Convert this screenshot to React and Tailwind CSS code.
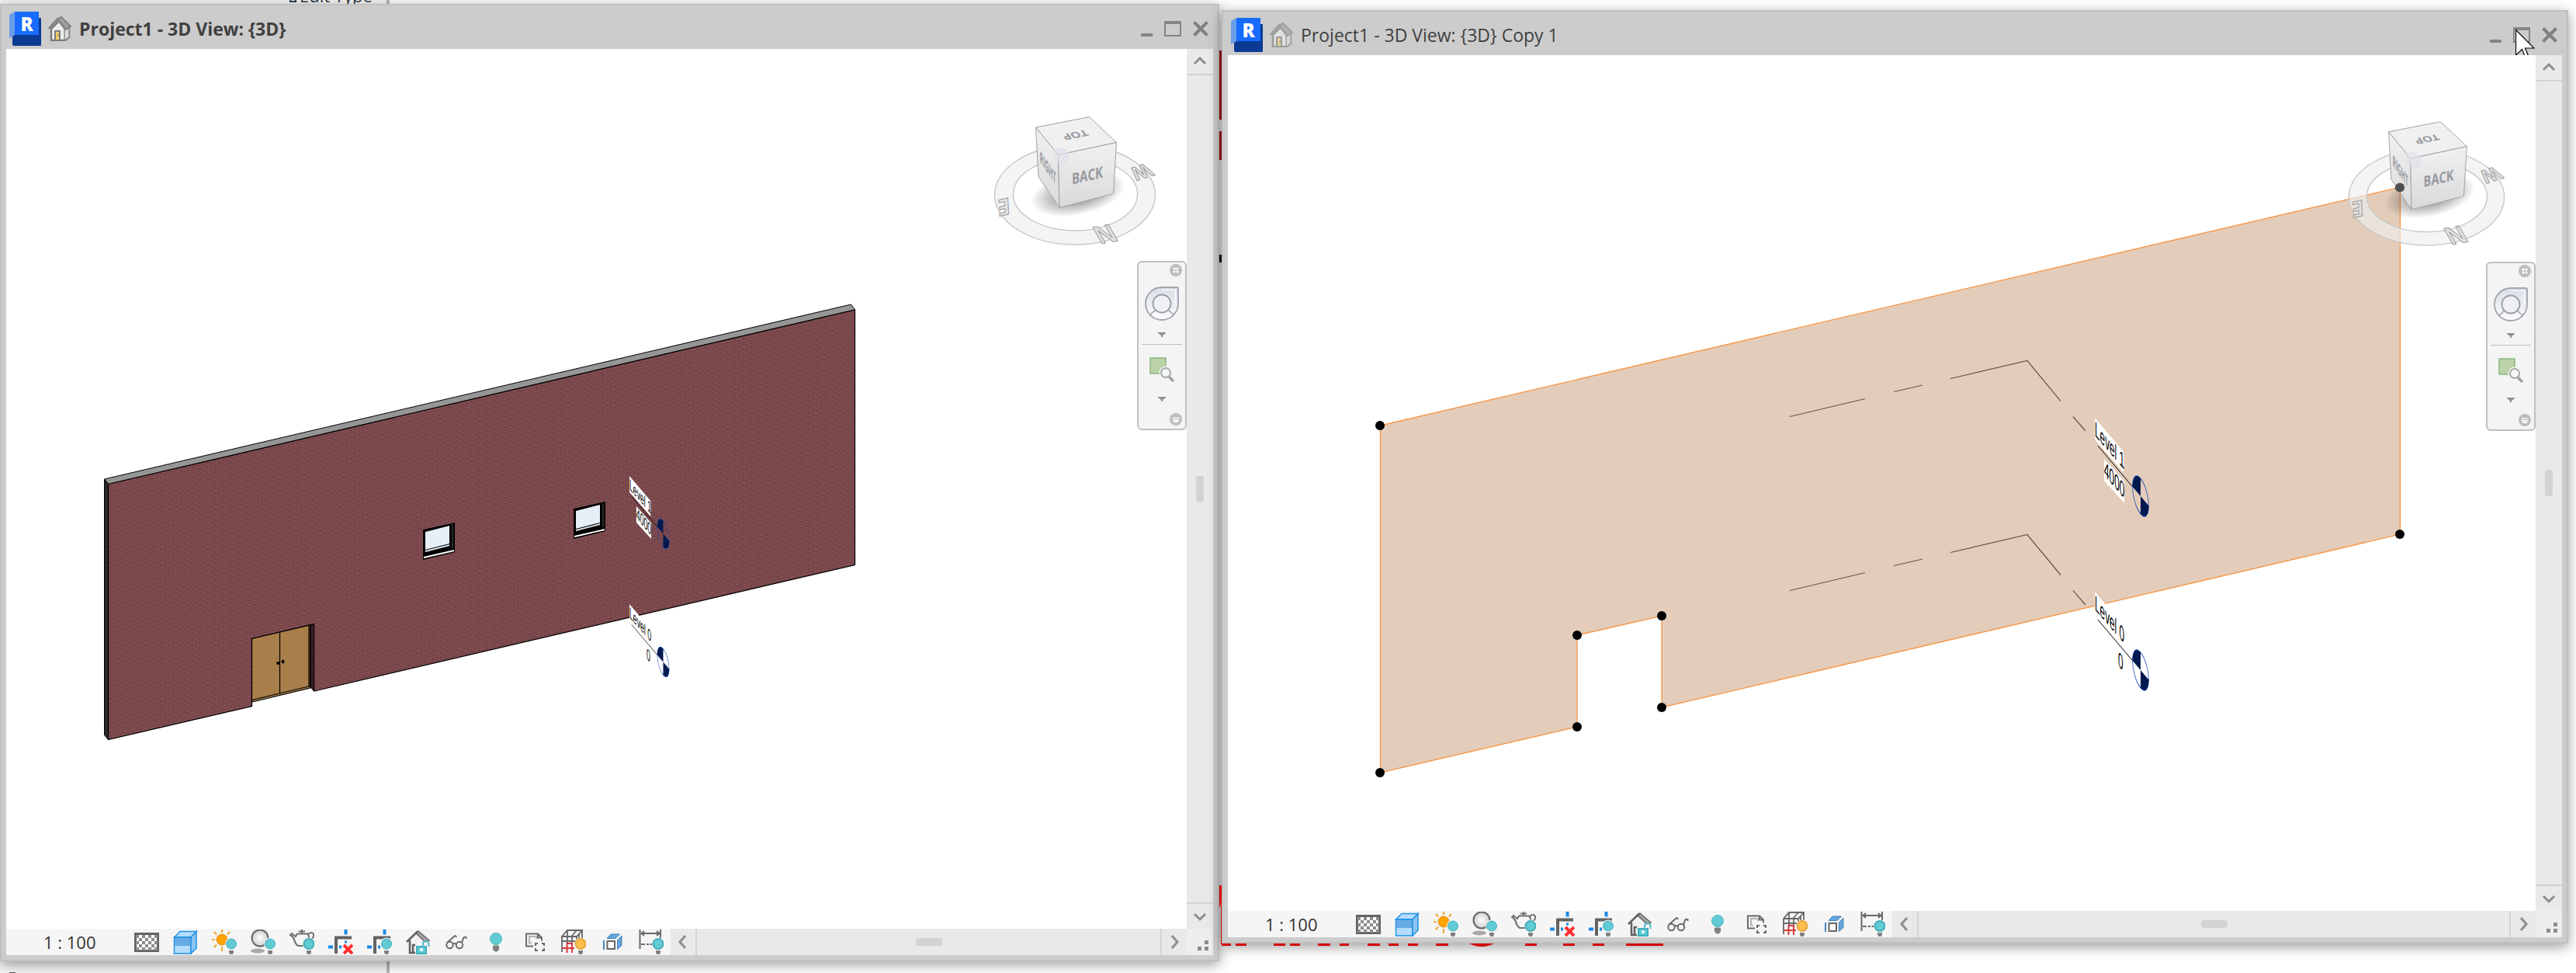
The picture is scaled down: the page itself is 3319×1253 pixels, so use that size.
import React from "react";

const FONT = 'font-["Open_Sans","Noto_Sans",sans-serif]';

/* ---------- small shared drawings ---------- */

function RevitLogo() {
  return (
    <svg className="h-11 w-[41px] shrink-0" viewBox="0 0 41 44" aria-label="Revit" role="img">
      <path d="M4 8H40a1 1 0 0 1 1 1V43a1 1 0 0 1-1 1H6a2 2 0 0 1-2-2Z" fill="#0a3a93" />
      <path d="M0 4 7 0V30L0 34.500Z" fill="#6a9de8" />
      <rect x="7" y="0" width="31" height="30" rx="1" fill="#186bff" />
      <text x="22.500" y="25" textAnchor="middle" fontFamily="Open Sans" fontWeight="800" fontSize="24" fill="#fff">R</text>
    </svg>
  );
}

function HomeIcon({ faded }) {
  return (
    <svg className={faded ? "h-8 w-[30px] shrink-0 opacity-60" : "h-8 w-[30px] shrink-0"} viewBox="0 0 30 32">
      <path d="M4 16V31H22L27 27V16L16 4Z" fill="#eee" stroke="#7c7c7c" strokeWidth="2.500" />
      <path d="M21 17 27 13V27l-6 4Z" fill="#ddd" stroke="#8a8a8a" strokeWidth="1.500" />
      <path d="M12 3.500 17 1 29 13l-6 4Z" fill="#a2a2a2" stroke="#808080" strokeWidth="2" />
      <path d="M1 16 12 3.500 22 16" fill="none" stroke="#868686" strokeWidth="3" />
      <rect x="9" y="19" width="6" height="12" fill="#f0cf68" stroke="#7c7c7c" strokeWidth="2" />
      <circle cx="13" cy="24.500" r="1" fill="#777" />
    </svg>
  );
}

function Cursor() {
  return (
    <svg className="pointer-events-none absolute left-[3px] top-[3px] h-[38px] w-[25px]" viewBox="0 0 25 38">
      <path d="M.5.5V33L8.500 25.500 13 36.500 17 35 12.500 24H24Z" fill="#fff" stroke="#000" strokeWidth="1.200" />
    </svg>
  );
}

function Bulb({ color = "#60cbd5", edge = "#45adb8" }) {
  return (
    <g>
      <circle cx="25" cy="18.500" r="8" fill="#f5f5f5" />
      <circle cx="25" cy="18.500" r="6.500" fill={color} stroke={edge} />
      <path d="M22 27h6v3l-1.500 2h-3L22 30Z" fill="#808080" />
    </g>
  );
}

/* ---------- view control icons, each on a 32 unit grid ---------- */

const CHECKS = [];
for (let r = 0; r < 5; r++) for (let c = 0; c < 7; c++) if ((r + c) % 2 === 0) CHECKS.push([2 + c * 4, 6 + r * 4]);

const CropMark = () => (
  <g>
    <path d="M10 31V10.500H30" fill="none" stroke="#636363" strokeWidth="4" />
    <path d="M20.500 0h4v6.500h-4ZM0 20.500h6v4H0ZM21 14.500h3v3h-3ZM14 20.500h3v4h-3Z" fill="#1b8ae6" />
  </g>
);

const VIEW_TOOLS = [
  ["Detail Level", (
    <g key="i">
      <rect x="1.500" y="5.500" width="29" height="22" fill="#fff" stroke="#636363" strokeWidth="3" />
      {CHECKS.map(([x, y]) => <rect key={x + "-" + y} x={x} y={y + 1} width="4" height="4" fill="#8c8c8c" />)}
    </g>
  )],
  ["Visual Style", (
    <g key="i" stroke="#2192e5" strokeWidth="1.500">
      <path d="M1.500 10 9 2.500H30L23 10Z" fill="#b3dcff" />
      <path d="M1.500 10H23V31H1.500Z" fill="#b3dcff" />
      <path d="M2 10.500H22.500V21H2Z" fill="#66abe5" stroke="none" />
      <path d="M23 10 30 2.500V24L23 31Z" fill="#8cc4f3" />
      <path d="M2 10H23" />
    </g>
  )],
  ["Sun Path", (
    <g key="i">
      <g stroke="#eeaa35" strokeWidth="2.200">
        <path d="M13 0v4M13 22v6M0 13h3.500M3 3l3 3.500M23 3l-3 3.500M3 23l3-3.500" />
      </g>
      <circle cx="13" cy="13" r="7" fill="#ffa300" stroke="#df9020" />
      <Bulb />
    </g>
  )],
  ["Shadows", (
    <g key="i">
      <defs>
        <radialGradient id="ball"><stop offset="0" stopColor="#fff" /><stop offset="1" stopColor="#cfcfcf" /></radialGradient>
      </defs>
      <ellipse cx="9" cy="27.500" rx="9" ry="3" fill="#a8a8a8" />
      <circle cx="12" cy="11" r="10.500" fill="url(#ball)" stroke="#666" strokeWidth="2" />
      <Bulb />
    </g>
  )],
  ["Rendering", (
    <g key="i" fill="none" stroke="#707070" strokeWidth="2">
      <path d="M10 5.500H23Q27 10 24 16L20 21H11Q7 18 6 13Q5 9 1 7L3 5 8 9ZM16 5V0M12 2.500h8M24 6q5-4 7 0 1 5-6 9" />
      <g stroke="none"><Bulb /></g>
    </g>
  )],
  ["Crop View Off", (
    <g key="i"><CropMark /><path d="M20 20 31 31M31 20 20 31" stroke="#ff3030" strokeWidth="4" /></g>
  )],
  ["Show Crop Region", <g key="i"><CropMark /><Bulb /></g>],
  ["Locked 3D View", (
    <g key="i">
      <path d="M5 14V30H14V18L26 14 16 5Z" fill="#f2f2f2" />
      <path d="M16 2 30 14 25 16 13 5Z" fill="#a3a3a3" stroke="#666" strokeWidth="1.500" />
      <path d="M1 16 15 2.500M5 14V30H16M9 29V20h5" fill="none" stroke="#606060" strokeWidth="2.500" />
      <rect x="12" y="19" width="16" height="13" fill="#f5f5f5" />
      <rect x="14" y="22" width="12" height="9" fill="#60cbd5" stroke="#43b0bc" strokeWidth="2" />
      <path d="M22 22V18q0-3 3.500-3t4 3v4" fill="none" stroke="#55bcc7" strokeWidth="2" />
      <circle cx="20" cy="26" r="2" fill="#fff" />
    </g>
  )],
  ["Temporary Hide/Isolate", (
    <g key="i" fill="none" stroke="#6a6a6a" strokeWidth="2">
      <circle cx="6.500" cy="20" r="4.200" /><circle cx="19" cy="20" r="4.200" />
      <path d="M10.500 19q2-2.500 4 0M3 17 12 9q2-2 3 1M22 17 24 11q1-2 3.500-1v2" />
    </g>
  )],
  ["Reveal Hidden Elements", (
    <g key="i">
      <circle cx="16" cy="12" r="7.500" fill="#60cbd5" stroke="#4eb5c0" />
      <path d="M12 20.500h8v5l-2.500 3h-3L12 25.500Z" fill="#808080" />
    </g>
  )],
  ["Temporary View Properties", (
    <g key="i" fill="none" stroke="#6b6b6b" strokeWidth="2">
      <path d="M14 21.500H5V5.500H20l5 5v4" />
      <path d="M20 5.500v5h5" />
      <path d="M12 17.500H9V9h9v3" stroke="#b5b5b5" />
      <path d="M17 21v-3h3M25 18h3v3M28 24v3h-3M20 27h-3v-3" />
    </g>
  )],
  ["Analytical Model", (
    <g key="i" fill="none" stroke="#676767" strokeWidth="1.800">
      <path d="M1 29V9L8 1H27V11M1 9H20V18M20 9 27 1M8 9V19M14 9V17M1 15H20M13 9 20 1M23 6V13M8 1V9" />
      <path d="M1 24H17M7.500 30V18H14V30" stroke="#d93a3a" strokeWidth="2" />
      <g stroke="none"><Bulb color="#fdbf4d" edge="#e5a33a" /></g>
    </g>
  )],
  ["Highlight Displacement Sets", (
    <g key="i">
      <path d="M9 11.500 14 6H25.500L20 11.500Z" fill="#64a5de" stroke="#4584bb" />
      <path d="M22.500 14 28 8V20.500L22.500 25.500Z" fill="#64a5de" stroke="#4584bb" />
      <path d="M5 14V26" stroke="#4584bb" strokeWidth="2" />
      <rect x="9.500" y="15" width="9.500" height="10" fill="#fff" stroke="#666" strokeWidth="2" />
    </g>
  )],
  ["Reveal Constraints", (
    <g key="i" fill="none" stroke="#696969" strokeWidth="2">
      <path d="M1.500 0V25M28 0V11M3 5H27M7 2 3.500 5 7 8M23 2 26.500 5 23 8M3 19H18" />
      <path d="M8 19h2M13 19h1.500" stroke="#f5f5f5" />
      <g stroke="none"><Bulb /></g>
    </g>
  )],
];

/* ---------- level head: tag text and symbol drawn in the view's projection ---------- */

function LevelHead({ x, y, scale = 1, name, height }) {
  return (
    <g transform={`translate(${x} ${y}) scale(${scale})`} fontFamily="Liberation Sans" fontSize="18">
      <path d="M0 0 37 43.500V70.500L0 28Z" fill="#fff" />
      {height !== "0" && <path d="M12 53 38 82V110L12 81Z" fill="#fff" />}
      <path d="M4 36 48 88" stroke="#000" strokeWidth="1" />
      <text transform="translate(0 23) rotate(49) skewX(49)">{name}</text>
      <text transform={height === "0" ? "translate(30 95) rotate(49) skewX(49)" : "translate(12 74) rotate(49) skewX(49)"}>{height}</text>
      <g transform="translate(59 101) matrix(.65 .76 0 1.41 0 0)">
        <circle r="16" fill="none" stroke="#1243b8" strokeWidth="1.200" />
        <path d="M0 0H-16A16 16 0 0 1 0-16ZM0 0H16A16 16 0 0 1 0 16Z" fill="#001a4f" />
      </g>
    </g>
  );
}

function WallWindow({ x, y }) {
  return (
    <g transform={`translate(${x} ${y})`}>
      <path d="M0 9 41 0V38L0 48Z" fill="#000" />
      <path d="M3 12 34 4V30L3 38Z" fill="#e6eef6" />
      <path d="M3 35.500 34 27.500" stroke="#000" strokeWidth="1.200" />
      <path d="M1 45 40 36" stroke="#fff" strokeWidth="1.800" />
      <path d="M38 2V33" stroke="#555" strokeWidth="1" />
    </g>
  );
}

function BrickWallDrawing() {
  return (
    <svg className="block h-full w-full" viewBox="8 63 1521 1133">
      <defs>
        <pattern id="brick" width="10" height="7" patternUnits="userSpaceOnUse" patternTransform="skewY(-13)">
          <rect width="10" height="7" fill="#864e52" />
          <path d="M0 .5H10M0 4H10" stroke="#673f42" strokeWidth="1" />
          <path d="M2.500 0V4M7.500 3.500V7" stroke="#673f42" strokeWidth="1" />
        </pattern>
      </defs>
      <path d="M134.500 617 1096.500 392 1101.500 399 139.500 623.500Z" fill="#969696" stroke="#000" />
      <path d="M134.500 617 139.500 623.500V952.500L134.500 946.500Z" fill="#2d2a2b" stroke="#000" />
      <path d="M139.500 623.500 1101.500 399V727.500L404.500 890V803.500L324.500 822.500V909.500L139.500 952.500Z" fill="url(#brick)" stroke="#000" strokeWidth="1.200" />
      <path d="M324.500 822.500 399.500 805V886L324.500 904Z" fill="#a87f4b" stroke="#000" strokeWidth="1.200" />
      <path d="M324.500 901.500 399.500 883.500M360.500 814V893M398 806V884" stroke="#000" strokeWidth="1.200" />
      <path d="M400 805 404.500 803.500V890L400 885Z" fill="#3a1f24" stroke="#000" />
      <ellipse cx="358.500" cy="854" rx="2.500" ry="2" /><ellipse cx="364.500" cy="852" rx="2" ry="2.500" />
      <WallWindow x={545} y={673} />
      <WallWindow x={739} y={646} />
      <LevelHead x={811} y={613} scale={0.737} name="Level 1" height="4000" />
      <LevelHead x={811} y={778} scale={0.737} name="Level 0" height="0" />
    </svg>
  );
}

const ANALYTICAL_NODES = [
  [1778, 548], [1778, 995], [2032, 936], [2032, 818], [2141, 793], [2141, 911], [3092, 688], [3092, 241],
];

function AnalyticalPanelDrawing() {
  return (
    <svg className="block h-full w-full" viewBox="1582 71 1685 1102">
      <path d="M1778.500 548 3092.500 241V688L2141 911V793L2032 818V936L1778.500 995Z" fill="#e3cdba" stroke="#f79646" strokeWidth="1.300" />
      {[0, 224].map((dy) => (
        <path
          key={dy}
          transform={`translate(0 ${dy})`}
          d="M2306 536.500 2403 513.500M2440 504.500 2477 496M2513 487.500 2612 464.500 2655 516.500M2671 536.500 2687 555"
          fill="none" stroke="#6b5443" strokeWidth="1.200"
        />
      ))}
      {ANALYTICAL_NODES.map(([cx, cy]) => <circle key={cx + "-" + cy} cx={cx} cy={cy} r="6" />)}
      <LevelHead x={2699} y={538} name="Level 1" height="4000" />
      <LevelHead x={2699} y={762} name="Level 0" height="0" />
    </svg>
  );
}

/* ---------- canvas overlays ---------- */

function ViewCube({ id, className, node }) {
  return (
    <svg className={"overflow-visible " + className} viewBox="1275 145 220 180">
      <defs>
        <radialGradient id={id + "s"}>
          <stop offset="0.400" stopColor="#000" stopOpacity="0.350" /><stop offset="1" stopColor="#000" stopOpacity="0" />
        </radialGradient>
        <linearGradient id={id + "f"} x1="0" y1="0" x2="0" y2="1">
          <stop offset="0" stopColor="#f1f1f2" /><stop offset="1" stopColor="#d9d9da" />
        </linearGradient>
      </defs>
      <path
        fillRule="evenodd" fill="#eeeeee" fillOpacity="0.650" stroke="#c4c4c4" strokeWidth="1.300"
        d="M1281.500 251A103.500 64 0 1 0 1488.500 251A103.500 64 0 1 0 1281.500 251ZM1305.500 250A80 47 0 1 1 1465.500 250A80 47 0 1 1 1305.500 250Z"
      />
      <ellipse cx="1389" cy="249" rx="62" ry="28" fill={`url(#${id}s)`} transform="rotate(-12 1389 249)" />
      <g fontFamily="Open Sans" fontWeight="700" fill="#dedede" fillOpacity="0.700" stroke="#979797" strokeWidth="1" textAnchor="middle">
        <text fontSize="29" transform="translate(1293 256) rotate(167) skewX(-10)">E</text>
        <text fontSize="32" transform="translate(1430 312) rotate(-10) skewX(20)">N</text>
        <text fontSize="25" transform="translate(1465 214) rotate(162) skewX(20)">W</text>
      </g>
      <g stroke="#a0a0a2" strokeWidth="1">
        <path d="M1334.500 164 1403.500 150.500 1438.500 183.500 1363.500 199.500Z" fill="#f0f0f1" />
        <path d="M1334.500 164 1363.500 199.500 1365 267.500 1338 227.500Z" fill={`url(#${id}f)`} />
        <path d="M1363.500 199.500 1438.500 183.500 1434.500 249.500 1365 267.500Z" fill={`url(#${id}f)`} />
      </g>
      {node && <circle cx="1349.500" cy="238" r="6.200" fill="#505050" />}
      <path d="M1358 192 1371 190 1377 197V210L1367 213 1358 204Z" fill="#dfe1ea" fillOpacity="0.700" />
      <g fontFamily="Open Sans" fontWeight="700" fontSize="16" fill="#96999f" textAnchor="middle">
        <text transform="matrix(.94 -.22 0 1.250 1401 233)">BACK</text>
        <text transform="matrix(.42 .6 0 1.250 1350 223)">RIGHT</text>
        <text transform="matrix(-.97 .2 -.45 -.65 1383 170)">TOP</text>
      </g>
    </svg>
  );
}

function DropArrow({ label }) {
  return (
    <button aria-label={label} className="flex h-5 w-11 items-center justify-center">
      <svg className="h-[6px] w-[10px]" viewBox="0 0 10 6"><path d="M0 0H10V1L6 4V6H4V4L0 1Z" fill="#8b9098" /></svg>
    </button>
  );
}

function NavigationBar({ className }) {
  return (
    <nav aria-label="Navigation bar" className={"absolute right-0 flex h-[218px] w-[64px] flex-col items-center rounded-md border-2 border-[#c0c0c0] bg-[#f4f4f4] px-1 " + className}>
      <button aria-label="Close navigation bar" className="mt-[2px] self-end">
        <svg className="size-4" viewBox="0 0 16 16">
          <circle cx="8" cy="8" r="8" fill="#bdbdbd" />
          <path d="M5 5 11 11M11 5 5 11" stroke="#fff" strokeWidth="2.500" /><circle cx="8" cy="8" r="1.500" fill="#bdbdbd" />
        </svg>
      </button>
      <button aria-label="Steering wheel" className="mt-[13px]">
        <svg className="h-[44px] w-[44px]" viewBox="0 0 44 44">
          <defs>
            <linearGradient id="wheel" x1="0" y1="0" x2="0" y2="1">
              <stop offset="0" stopColor="#dadee6" /><stop offset="1" stopColor="#fdfdfd" />
            </linearGradient>
          </defs>
          <path d="M22 1H41Q43 1 43 3V22A21 21 0 1 1 22 1Z" fill="url(#wheel)" stroke="#a1a5ad" strokeWidth="1.800" />
          <path d="M22 4.500H39.500V22" fill="none" stroke="#fff" strokeWidth="1" />
          <circle cx="22" cy="22" r="11.500" fill="#eef0f4" stroke="#989ca5" strokeWidth="1.800" />
          <path d="M14 30 7 36M30 30 37 36" stroke="#989ca5" strokeWidth="1.500" />
        </svg>
      </button>
      <div className="mt-2"><DropArrow label="Wheel options" /></div>
      <div className="mt-[2px] h-px w-full bg-[#bdbdbd]" />
      <button aria-label="Zoom in region" className="mt-4">
        <svg className="size-8" viewBox="0 0 32 32">
          <rect x="1" y="1" width="20" height="20" fill="#bbd2a9" stroke="#8db582" strokeWidth="1.500" />
          <circle cx="21" cy="20" r="8.500" fill="#f4f4f4" />
          <path d="M25 25 31 31" stroke="#a1a1a1" strokeWidth="3.500" />
          <circle cx="21" cy="20" r="6" fill="#f4f8f8" stroke="#a9a9a9" strokeWidth="2" />
        </svg>
      </button>
      <div className="mt-3"><DropArrow label="Zoom options" /></div>
      <button aria-label="Customize" className="mt-2 self-end">
        <svg className="size-4" viewBox="0 0 16 16">
          <circle cx="8" cy="8" r="8" fill="#bdbdbd" />
          <path d="M3.500 6H12.500M4.500 8.500H11.500L10 11.500H6Z" fill="#f4f4f4" stroke="#f4f4f4" strokeWidth="1.500" />
        </svg>
      </button>
    </nav>
  );
}

/* ---------- scroll bars ---------- */

const CHEVRONS = { up: "M2 12 9 5 16 12", down: "M2 6 9 13 16 6", left: "M12 1 5 9 12 17", right: "M6 1 13 9 6 17" };

function ScrollArrow({ dir, className }) {
  return (
    <button aria-label={"Scroll " + dir} className={"flex shrink-0 items-center justify-center border-[#d3d3d3] bg-[#e9e9e9] " + className}>
      <svg className="size-[18px]" viewBox="0 0 18 18">
        <path d={CHEVRONS[dir]} fill="none" stroke="#8e8e8e" strokeWidth="3" />
      </svg>
    </button>
  );
}

/* ---------- window frame ---------- */

function ViewWindow({ title, active, pointer, className, children }) {
  return (
    <section aria-label={title} className={"flex min-w-0 flex-col border-2 border-[#c0c0c0] bg-[#cccccc] px-[6px] pb-[6px] shadow-[0_4px_16px_rgba(0,0,0,0.4)] " + className}>
      <header className="flex h-14 shrink-0 items-center pl-1 pr-[6px] pt-1">
        <RevitLogo />
        <span className="ml-[9px] mr-[10px]"><HomeIcon faded={!active} /></span>
        <h1 className={active ? "flex-1 whitespace-nowrap text-[23px] font-bold leading-8 text-[#404040]" : "flex-1 whitespace-nowrap text-[23px] leading-8 text-[#404040]"}>{title}</h1>
        <div className="flex items-center gap-[15px]">
          <button aria-label="Minimize">
            <svg className="h-5 w-[15px]" viewBox="0 0 15 20"><path d="M0 18H15" stroke="#858585" strokeWidth="4" /></svg>
          </button>
          <button aria-label="Maximize" className="relative">
            <svg className="h-5 w-[22px]" viewBox="0 0 22 20"><path d="M0 0H22V20H0ZM2 4V18H20V4Z" fill="#858585" fillRule="evenodd" /></svg>
            {pointer && <Cursor />}
          </button>
          <button aria-label="Close">
            <svg className="size-5" viewBox="0 0 20 20"><path d="M1.500 1.500 18.500 18.500M18.500 1.500 1.500 18.500" stroke="#808080" strokeWidth="4" /></svg>
          </button>
        </div>
      </header>

      <div className="flex min-h-0 flex-1">
        <main className="relative min-w-0 flex-1 overflow-hidden bg-white">{children}</main>
        <div className="flex w-[34px] flex-col bg-[#e9e9e9]">
          <ScrollArrow dir="up" className="h-[34px] border-b-2" />
          <div className="flex flex-1 items-center justify-center">
            <div className="h-[34px] w-[10px] rounded bg-[#d3d3d3]" />
          </div>
          <ScrollArrow dir="down" className="h-[34px] border-t-2" />
        </div>
      </div>

      <footer className="flex h-[34px] shrink-0 bg-[#f5f5f5]">
        <div className="flex w-[856px] shrink-0 items-center">
          <button className="w-[165px] pl-12 text-left text-[22px] leading-8 text-[#333]">1 : 100</button>
          <div className="flex gap-[18px]">
            {VIEW_TOOLS.map(([label, icon]) => (
              <button key={label} aria-label={label} className="size-8">
                <svg className="size-8" viewBox="0 0 32 32">{icon}</svg>
              </button>
            ))}
          </div>
        </div>
        <ScrollArrow dir="left" className="w-[34px] border-r-2" />
        <div className="flex flex-1 items-center justify-center bg-[#e9e9e9]">
          <div className="h-[10px] w-[34px] rounded bg-[#d3d3d3]" />
        </div>
        <ScrollArrow dir="right" className="w-[34px] border-l-2" />
        <div className="w-[34px] bg-[#eeeeee]">
          <svg className="size-[34px]" viewBox="0 0 34 34">
            <path d="M23 15h5v5h-5ZM23 23h5v5h-5ZM14 23h5v5h-5Z" fill="#8c8c8c" />
          </svg>
        </div>
      </footer>
    </section>
  );
}

/* ---------- what shows behind the two windows ---------- */

const RED_MARKS = [
  [0, 12], [18, 14], [67, 15], [88, 13], [124, 16], [152, 12], [188, 16], [215, 13], [240, 13], [276, 16],
  [391, 15], [440, 15], [478, 15], [521, 48],
];

function Backdrop() {
  return (
    <div className="absolute inset-0 overflow-hidden bg-white">
      <div className="h-full w-[502px] border-r-4 border-[#b8b8b8] bg-[#f6f6f6]" />
      <div className="absolute left-[365px] top-[-22px] flex h-8 items-center gap-1 text-[22px] leading-8 text-[#333f4d]">
        <svg className="size-[17px]" viewBox="0 0 17 17"><path d="M0 13H6M9 8H16V16H9Z" fill="none" stroke="#333f4d" strokeWidth="2" /></svg>
        Edit Type
      </div>
      <span className="absolute bottom-0 left-3 h-px w-2 bg-[#555]" />
    </div>
  );
}

function RedCaption() {
  return (
    <>
      <svg className="pointer-events-none absolute left-[1571px] top-0 h-[1253px] w-[3px]" viewBox="0 0 3 1253" preserveAspectRatio="xMinYMin meet">
        <path d="M0 65h3v89H0ZM0 169h3v37H0Z" fill="#7d0a10" />
        <path d="M0 328h3v10H0Z" fill="#000" />
        <path d="M0 1140h3v12L1 1168H0ZM2 1150h1v66H2Z" fill="#d30000" />
      </svg>
      <svg className="pointer-events-none absolute bottom-[34px] left-[1574px] h-[4px] w-[600px]" viewBox="0 0 600 4">
        {RED_MARKS.map(([x, w]) => <rect key={x} x={x} y="0" width={w} height="3" fill="#d30000" />)}
        <path d="M319 0H351Q335 8 319 0Z" fill="#d30000" />
      </svg>
    </>
  );
}

export default function App() {
  return (
    <div className={"relative flex h-screen gap-[3px] overflow-hidden pr-[10px] " + FONT}>
      <Backdrop />
      <ViewWindow title="Project1 - 3D View: {3D}" active className="relative mb-[15px] mt-[5px] flex-[1555_1_0%]">
        <BrickWallDrawing />
        <ViewCube id="a" className="absolute right-[34px] top-[82px] h-[180px] w-[220px]" />
        <NavigationBar className="top-[273px]" />
      </ViewWindow>
      <ViewWindow title="Project1 - 3D View: {3D} Copy 1" pointer className="relative mb-[38px] mt-[13px] flex-[1719_1_0%]">
        <AnalyticalPanelDrawing />
        <ViewCube id="b" node className="absolute right-[34px] top-20 h-[175px] w-[213px]" />
        <NavigationBar className="top-[266px]" />
      </ViewWindow>
      <RedCaption />
    </div>
  );
}
